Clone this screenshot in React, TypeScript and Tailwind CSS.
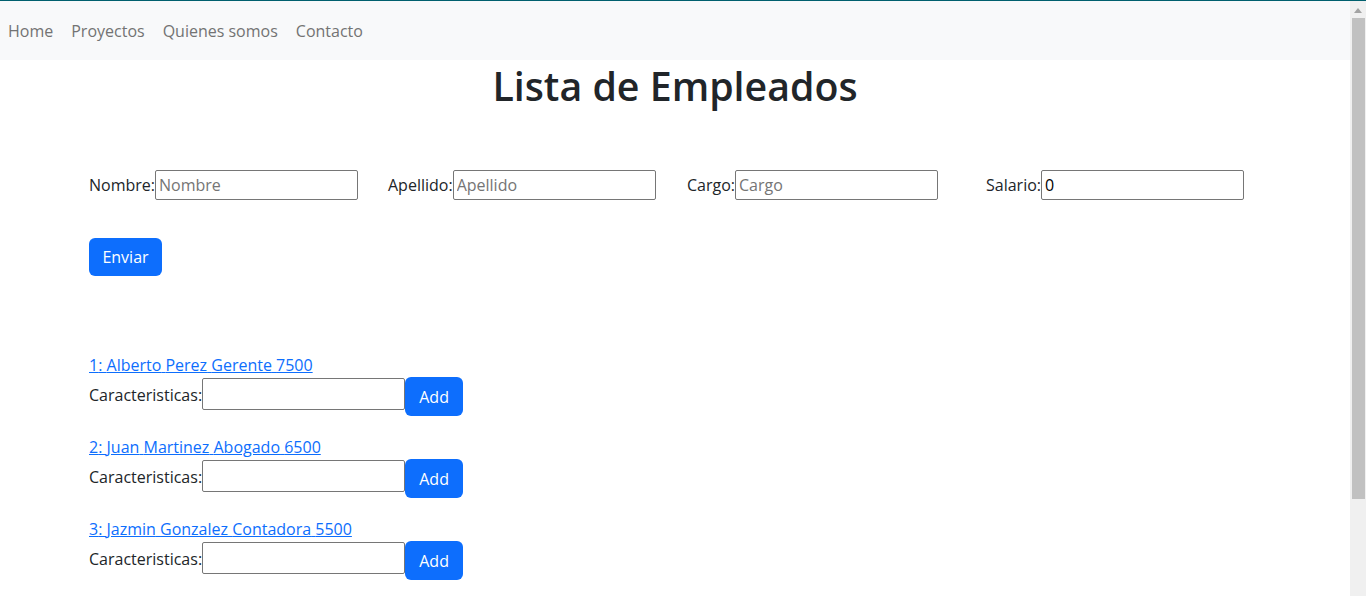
import { useState } from "react";

const menu = ["Home", "Proyectos", "Quienes somos", "Contacto"];

const campos = [
  { label: "Nombre:", placeholder: "Nombre", value: "" },
  { label: "Apellido:", placeholder: "Apellido", value: "" },
  { label: "Cargo:", placeholder: "Cargo", value: "" },
  { label: "Salario:", placeholder: "", value: "0" },
];

const empleados = [
  { id: 1, nombre: "Alberto", apellido: "Perez", cargo: "Gerente", salario: 7500 },
  { id: 2, nombre: "Juan", apellido: "Martinez", cargo: "Abogado", salario: 6500 },
  { id: 3, nombre: "Jazmin", apellido: "Gonzalez", cargo: "Contadora", salario: 5500 },
];

// barra de scroll al estilo del navegador
function Scrollbar() {
  return (
    <aside className="flex w-[16px] shrink-0 flex-col bg-[#f0f0f0]">
      <div className="flex h-[17px] items-start justify-center pt-[7px]">
        <svg width="8" height="5" viewBox="0 0 8 5">
          <polygon points="4,0 8,5 0,5" fill="#a3a3a3" />
        </svg>
      </div>
      <div className="ml-[2px] mr-[1px] h-[481px] bg-[#c1c1c1]" />
    </aside>
  );
}

export default function App() {
  const [valores, setValores] = useState(campos.map((c) => c.value));

  return (
    <div className="flex h-[596px] overflow-hidden border-t border-[#00606e] bg-white font-['Open_Sans',sans-serif] text-[16px] text-[#212529]">
      <main className="min-w-0 flex-1">
        <nav className="h-[59px] bg-[#f8f9fa]">
          <ul className="flex h-full items-center gap-[18px] pl-2">
            {menu.map((item) => (
              <li key={item}>
                <a href="#" className="text-[16px] text-[#737373] hover:text-[#333]">
                  {item}
                </a>
              </li>
            ))}
          </ul>
        </nav>

        <h1 className="mt-[2px] text-center text-[39.3px] font-semibold leading-[48px] text-[#212529]">
          Lista de Empleados
        </h1>

        <form className="ml-[89px] mt-[60px]" onSubmit={(e) => e.preventDefault()}>
          <div className="grid w-[1196px] grid-cols-4">
            {campos.map((campo, i) => (
              <div key={campo.label} className="flex items-center">
                <label className="text-[#212529]">{campo.label}</label>
                <input
                  type="text"
                  placeholder={campo.placeholder}
                  value={valores[i]}
                  onChange={(e) =>
                    setValores((v) => v.map((x, j) => (j === i ? e.target.value : x)))
                  }
                  className="h-[30px] w-[203px] rounded-[2px] border border-[#767676] px-[3px] text-[16px] text-black placeholder:text-[#757575]"
                />
              </div>
            ))}
          </div>
          <button
            type="submit"
            className="mt-[38px] h-[38px] w-[73px] rounded-[6px] bg-[#0d6efd] text-white"
          >
            Enviar
          </button>
        </form>

        <ul className="ml-[89px] mt-[77px] flex flex-col gap-[19px]">
          {empleados.map((e) => (
            <li key={e.id}>
              <a href="#" className="text-[#0d6efd] underline">
                {e.id}: {e.nombre} {e.apellido} {e.cargo} {e.salario}
              </a>
              <div className="flex items-center">
                <label className="mb-[3px]">Caracteristicas:</label>
                <input
                  type="text"
                  className="mb-[6px] h-[32px] w-[203px] rounded-[2px] border border-[#767676] px-[3px]"
                />
                <button className="h-[39px] w-[58px] rounded-[6px] bg-[#0d6efd] text-white">
                  Add
                </button>
              </div>
            </li>
          ))}
        </ul>
      </main>
      <Scrollbar />
    </div>
  );
}
